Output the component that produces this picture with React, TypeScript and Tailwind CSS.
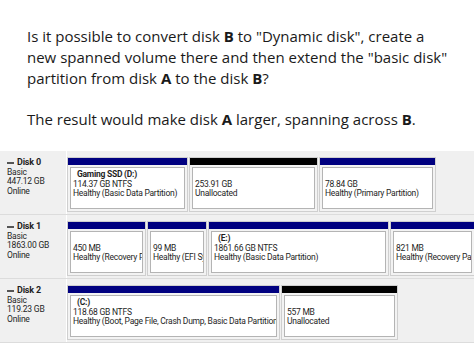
import React from 'react'

type Part = {
  w: string
  bar: 'blue' | 'black'
  name?: string
  size: string
  status: string
}

type Disk = {
  id: string
  kind: string
  size: string
  state: string
  parts: Part[]
}

const disks: Disk[] = [
  {
    id: 'Disk 0',
    kind: 'Basic',
    size: '447.12 GB',
    state: 'Online',
    parts: [
      { w: 'w-[121px]', bar: 'blue', name: 'Gaming SSD  (D:)', size: '114.37 GB NTFS', status: 'Healthy (Basic Data Partition)' },
      { w: 'w-[129px]', bar: 'black', size: '253.91 GB', status: 'Unallocated' },
      { w: 'w-[117px]', bar: 'blue', size: '78.84 GB', status: 'Healthy (Primary Partition)' },
    ],
  },
  {
    id: 'Disk 1',
    kind: 'Basic',
    size: '1863.00 GB',
    state: 'Online',
    parts: [
      { w: 'w-[79px]', bar: 'blue', size: '450 MB', status: 'Healthy (Recovery Partition)' },
      { w: 'w-[60px]', bar: 'blue', size: '99 MB', status: 'Healthy (EFI System Partition)' },
      { w: 'w-[181px]', bar: 'blue', name: '(E:)', size: '1861.66 GB NTFS', status: 'Healthy (Basic Data Partition)' },
      { w: 'w-[85px]', bar: 'blue', size: '821 MB', status: 'Healthy (Recovery Partition)' },
    ],
  },
  {
    id: 'Disk 2',
    kind: 'Basic',
    size: '119.23 GB',
    state: 'Online',
    parts: [
      { w: 'w-[213px]', bar: 'blue', name: '(C:)', size: '118.68 GB NTFS', status: 'Healthy (Boot, Page File, Crash Dump, Basic Data Partition)' },
      { w: 'w-[117px]', bar: 'black', size: '557 MB', status: 'Unallocated' },
    ],
  },
]

const PartBox = ({ part }: { part: Part }) => (
  <div className={`${part.w} shrink-0 flex flex-col border border-[#cfcfcf] bg-[#f3f3f3]`}>
    <div className={part.bar === 'blue' ? 'h-[7px] bg-[#000080]' : 'h-[7px] bg-black'} />
    <div className="flex-1 p-[2px]">
      <div className="h-full border border-[#b4b4b4] bg-white pl-[2px] pt-[2px] overflow-hidden whitespace-nowrap leading-[9.5px] text-[8.5px] tracking-[-0.25px] text-[#1e1e1e]">
        <div className="font-bold pl-[4px] h-[9.5px]">{part.name ?? ''}</div>
        <div>{part.size}</div>
        <div>{part.status}</div>
      </div>
    </div>
  </div>
)

const DiskRow = ({ disk }: { disk: Disk }) => (
  <div className="flex h-[64px] border-b border-[#dcdcdc]">
    <div className="w-[67px] shrink-0 border-r border-white bg-[#f0f0f0] pl-[7px] pt-[7px] leading-[9.5px] text-[8.5px] tracking-[-0.2px] text-[#1e1e1e]">
      <div className="flex items-center gap-[3px] font-bold text-[9px]">
        <span className="w-[7px] h-[2px] bg-[#555]" />
        {disk.id}
      </div>
      <div>{disk.kind}</div>
      <div>{disk.size}</div>
      <div>{disk.state}</div>
    </div>
    <div className="flex gap-px pt-[6px] pb-[2px]">
      {disk.parts.map((p, i) => (
        <PartBox key={i} part={p} />
      ))}
    </div>
  </div>
)

export default function App() {
  return (
    <div className="w-[474px] h-[348px] overflow-hidden bg-white font-['Open_Sans',sans-serif]">
      <div className="w-[455px] pl-[27px] pt-[26px] text-[15px] leading-[21px] text-[#1a1a1a]">
        <p>
          Is it possible to convert disk <b>B</b> to "Dynamic disk", create a new spanned volume there and then extend the
          "basic disk" partition from disk <b>A</b> to the disk <b>B</b>?
        </p>
        <p className="mt-[20px]">
          The result would make disk <b>A</b> larger, spanning across <b>B</b>.
        </p>
      </div>
      <div className="mt-[21px] bg-[#f0f0f0] font-['Roboto',sans-serif]">
        {disks.map((d) => (
          <DiskRow key={d.id} disk={d} />
        ))}
      </div>
    </div>
  )
}
